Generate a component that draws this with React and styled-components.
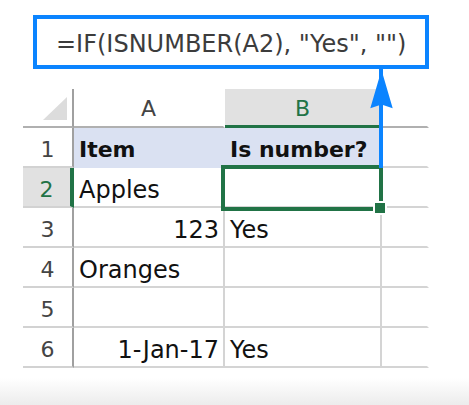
import React from "react";
import styled, { createGlobalStyle } from "styled-components";

const GlobalStyle = createGlobalStyle`
  html, body {
    margin: 0;
    padding: 0;
    background: #fff;
  }
  body {
    font-family: "DejaVu Sans", "Liberation Sans", sans-serif;
  }
`;

const rows = [
  { n: 1, a: "Item", b: "Is number?", head: true },
  { n: 2, a: "Apples", b: "", selected: true },
  { n: 3, a: "123", b: "Yes", num: true },
  { n: 4, a: "Oranges", b: "" },
  { n: 5, a: "", b: "" },
  { n: 6, a: "1-Jan-17", b: "Yes", num: true },
];

const Page = styled.div`
  position: relative;
  box-sizing: border-box;
  width: 469px;
  height: 405px;
  padding-top: 15px;
  display: flex;
  flex-direction: column;
  overflow: hidden;
`;

const FormulaBar = styled.div`
  box-sizing: border-box;
  margin-left: 33px;
  width: 396px;
  height: 54px;
  border: 4px solid #0b84ff;
  padding: 4px 0 0 19px;
  font-size: 24px;
  line-height: 42px;
  color: #3c3c3c;
  white-space: nowrap;
`;

const Sheet = styled.div`
  margin: 20px 0 0 23px;
  display: grid;
  grid-template-columns: 51px 151px 157px 47px;
  grid-template-rows: 39px repeat(6, 40px);
`;

const CornerCell = styled.div`
  box-sizing: border-box;
  border-right: 2px solid #a0a0a0;
  border-bottom: 2px solid #b0b0b0;
  display: flex;
  justify-content: flex-end;
  align-items: flex-end;
  padding: 0 5px 6px 0;
`;

const Triangle = styled.div`
  width: 24px;
  height: 23px;
  background: #dcdcdc;
  clip-path: polygon(100% 0, 100% 100%, 0 100%);
`;

const ColHeader = styled.div`
  box-sizing: border-box;
  padding-top: 3px;
  line-height: 34px;
  font-size: 22px;
  text-align: center;
  color: ${(p) => (p.$selected ? "#217346" : "#444")};
  background: ${(p) => (p.$selected ? "#e1e1e1" : "#fff")};
  border-right: 2px solid transparent;
  border-bottom: ${(p) =>
    p.$selected ? "3px solid #217346" : "2px solid #b0b0b0"};
`;

const RowHeader = styled.div`
  box-sizing: border-box;
  padding-top: 6px;
  line-height: 32px;
  font-size: 22px;
  text-align: center;
  color: ${(p) => (p.$selected ? "#217346" : "#444")};
  background: ${(p) => (p.$selected ? "#e1e1e1" : "#fff")};
  border-right: ${(p) =>
    p.$selected ? "4px solid #217346" : "2px solid #a0a0a0"};
  border-bottom: 2px solid #d2d2d2;
`;

const Cell = styled.div`
  position: relative;
  z-index: ${(p) => (p.$active ? 2 : "auto")};
  box-sizing: border-box;
  padding: 6px 4px 0 5px;
  line-height: 32px;
  font-size: ${(p) => (p.$head ? "22px" : "24px")};
  font-weight: ${(p) => (p.$head ? 700 : 400)};
  text-align: ${(p) => (p.$num ? "right" : "left")};
  color: #111;
  white-space: nowrap;
  background: ${(p) => (p.$head ? "#dae1f2" : "#fff")};
  border-bottom: 2px solid ${(p) => (p.$head ? "transparent" : "#d4d4d4")};
  border-right: 2px solid
    ${(p) => (p.$head || p.$edge ? "transparent" : "#d4d4d4")};
`;

const Selection = styled.div`
  position: absolute;
  left: -4px;
  top: -3px;
  width: 162px;
  height: 46px;
  box-sizing: border-box;
  border: 4px solid #217346;
  pointer-events: none;
`;

const FillHandle = styled.div`
  position: absolute;
  right: -6px;
  bottom: -6px;
  width: 10px;
  height: 10px;
  background: #217346;
  box-shadow: 0 0 0 2px #fff;
`;

const Arrow = styled.svg`
  position: absolute;
  z-index: 3;
  left: 367px;
  top: 66px;
  width: 28px;
  height: 104px;
`;

const Footer = styled.div`
  flex: 1;
  background: linear-gradient(to bottom, #fff 0, #fff 10px, #ececec 100%);
`;

export default function App() {
  return (
    <>
      <GlobalStyle />
      <Page>
        <FormulaBar>=IF(ISNUMBER(A2), "Yes", "")</FormulaBar>
        <Sheet>
          <CornerCell>
            <Triangle />
          </CornerCell>
          <ColHeader>A</ColHeader>
          <ColHeader $selected>B</ColHeader>
          <ColHeader />
          {rows.map((r) => (
            <React.Fragment key={r.n}>
              <RowHeader $selected={r.selected}>{r.n}</RowHeader>
              <Cell $head={r.head} $num={r.num}>
                {r.a}
              </Cell>
              <Cell $head={r.head} $active={r.selected}>
                {r.b}
                {r.selected && (
                  <Selection>
                    <FillHandle />
                  </Selection>
                )}
              </Cell>
              <Cell $edge />
            </React.Fragment>
          ))}
        </Sheet>
        <Footer />
        <Arrow viewBox="0 0 28 104">
          <rect x="12" y="3" width="4" height="99" fill="#0b84ff" />
          <path d="M14.5 4 L25.7 42.3 L14.5 38.5 L3.3 42.3 Z" fill="#0b84ff" />
        </Arrow>
      </Page>
    </>
  );
}
